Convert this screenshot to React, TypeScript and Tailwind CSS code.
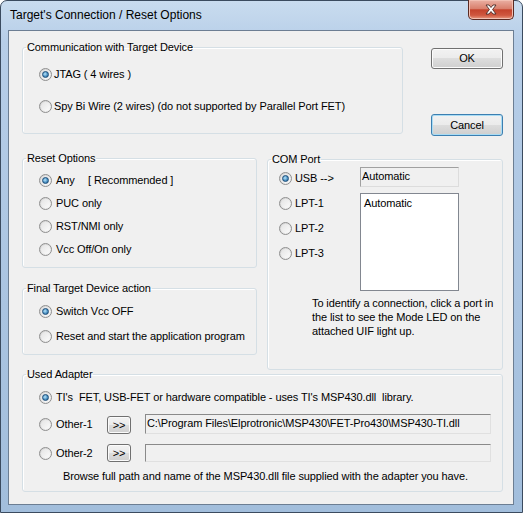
import React from "react";

const font = "font-['Liberation_Sans',Arial,sans-serif]";

function Radio({ checked }: { checked?: boolean }) {
  return (
    <span className="relative flex h-[13px] w-[13px] shrink-0 items-center justify-center rounded-full border border-[#8f8f8f] bg-[linear-gradient(135deg,#cfcfcf,#f7f7f7)]">
      <span className="h-[9px] w-[9px] rounded-full bg-[linear-gradient(135deg,#e4e4e4,#fbfbfb)]" />
      {checked && (
        <span className="absolute h-[7px] w-[7px] rounded-full border border-[#1d4e79] bg-[radial-gradient(circle_at_40%_40%,#b9e6fb,#4d92c4_55%,#1f5c8c)]" />
      )}
    </span>
  );
}

function Option({
  checked,
  children,
  gap = "gap-[4px]",
}: {
  checked?: boolean;
  children: React.ReactNode;
  gap?: string;
}) {
  return (
    <div className={`flex h-[16px] items-center ${gap}`}>
      <Radio checked={checked} />
      <span className="whitespace-pre leading-[16px]">{children}</span>
    </div>
  );
}

function Group({
  title,
  className,
  children,
}: {
  title: string;
  className: string;
  children: React.ReactNode;
}) {
  return (
    <fieldset
      className={`min-w-0 rounded-[3px] border border-[#d5dfe5] shadow-[inset_1px_1px_0_#ffffff] ${className}`}
    >
      <legend className="ml-[3px] px-[1px] leading-[12px]">{title}</legend>
      {children}
    </fieldset>
  );
}

function Button({
  children,
  focused,
  className,
}: {
  children: React.ReactNode;
  focused?: boolean;
  className: string;
}) {
  return (
    <div
      className={`flex items-center justify-center rounded-[3px] border bg-[linear-gradient(#f2f2f2_0%,#ebebeb_50%,#dddddd_50%,#cfcfcf_100%)] ${
        focused
          ? "border-[#3c7fb1] shadow-[inset_0_0_0_1px_#a9dcf4]"
          : "border-[#707070] shadow-[inset_0_0_0_1px_#fbfbfb]"
      } ${className}`}
    >
      {children}
    </div>
  );
}

function CloseGlyph() {
  return (
    <svg width="12" height="11" viewBox="0 0 12 11">
      <path
        d="M1 1h3l2 2.5L8 1h3L7.6 5.5 11 10H8L6 7.5 4 10H1l3.4-4.5z"
        fill="#ffffff"
        stroke="#4b2a26"
        strokeWidth="0.9"
        strokeLinejoin="round"
      />
    </svg>
  );
}

export default function App() {
  return (
    <div
      className={`flex h-[513px] w-[523px] flex-col rounded-t-[7px] border border-[#3b4b5f] bg-[linear-gradient(180deg,#c9dcef_0%,#b7cee8_8%,#aac4e1_60%,#a2bedc_100%)] text-[11px] tracking-[-0.1px] text-black ${font}`}
    >
      {/* TITLE BAR */}
      <div className="flex h-[29px] shrink-0 items-start justify-between">
        <div className="pl-[9px] pt-[7px] text-[12px] leading-[15px] tracking-normal text-black">
          Target's Connection / Reset Options
        </div>
        <div className="-mt-px mr-[8px] flex h-[20px] w-[46px] items-center justify-center rounded-b-[5px] border border-t-0 border-[#5a2a22] bg-[linear-gradient(#eab0a3_0%,#d9806d_45%,#c4432c_52%,#cf573f_80%,#e89a80_100%)] shadow-[inset_0_0_0_1px_#f2c0b3]">
          <CloseGlyph />
        </div>
      </div>

      {/* CLIENT */}
      <div className="ml-[7px] mr-[8px] h-[475px] shrink-0 border border-[#6c7e93] bg-[#f0f0f0] pl-[13px] pt-[10px]">
        {/* ROW 1 */}
        <div className="flex">
          <Group title="Communication with Target Device" className="h-[93px] w-[381px]">
            <div className="pl-[16px] pt-[13px]">
              <Option checked gap="gap-[2px]">JTAG ( 4 wires )</Option>
              <div className="mt-[16px]">
                <Option gap="gap-[2px]">Spy Bi Wire (2 wires) (do not supported by Parallel Port FET)</Option>
              </div>
            </div>
          </Group>
          <div className="ml-[28px] mt-[7px] flex flex-col">
            <Button className="h-[21px] w-[72px]">OK</Button>
            <Button focused className="mt-[45px] h-[22px] w-[72px]">
              Cancel
            </Button>
          </div>
        </div>

        {/* ROW 2 */}
        <div className="mt-[16px] flex gap-[10px]">
          <div className="flex w-[235px] flex-col">
            <Group title="Reset Options" className="h-[116px] w-[235px]">
              <div className="flex flex-col gap-[7px] pl-[16px] pt-[8px]">
                <Option checked>
                  <span className="inline-block w-[32px]">Any</span>[ Recommended ]
                </Option>
                <Option>PUC only</Option>
                <Option>RST/NMI only</Option>
                <Option>Vcc Off/On only</Option>
              </div>
            </Group>
            <Group title="Final Target Device action" className="mt-[14px] h-[73px] w-[235px]">
              <div className="flex flex-col gap-[9px] pl-[16px] pt-[9px]">
                <Option checked>Switch Vcc OFF</Option>
                <Option>Reset and start the application program</Option>
              </div>
            </Group>
          </div>

          <Group title="COM Port" className="mt-px h-[217px] w-[236px]">
            <div className="flex">
              <div className="flex w-[92px] flex-col gap-[9px] pl-[11px] pt-[5px]">
                <Option checked gap="gap-[3px]">USB --&gt;</Option>
                <Option gap="gap-[3px]">LPT-1</Option>
                <Option gap="gap-[3px]">LPT-2</Option>
                <Option gap="gap-[3px]">LPT-3</Option>
              </div>
              <div className="flex flex-col pt-[2px]">
                <div className="h-[20px] w-[99px] border border-[#a0a0a0] border-b-[#dcdcdc] border-r-[#dcdcdc] bg-[#f0f0f0] pl-[1px] leading-[16px]">
                  Automatic
                </div>
                <div className="mt-[6px] h-[98px] w-[99px] border border-[#828790] bg-white pl-[3px] pt-[2px] leading-[14px]">
                  Automatic
                </div>
              </div>
            </div>
            <p className="pl-[44px] pt-[5px] leading-[14px]">
              To identify a connection, click a port in
              <br />
              the list to see the Mode LED on the
              <br />
              attached UIF light up.
            </p>
          </Group>
        </div>

        {/* ROW 3 */}
        <Group title="Used Adapter" className="-mt-[2px] h-[124px] w-[481px]">
          <div className="flex flex-col pl-[16px] pt-[9px]">
            <Option checked>TI's  FET, USB-FET or hardware compatible - uses TI's MSP430.dll  library.</Option>

            <div className="mt-[9px] flex h-[20px] items-center">
              <div className="w-[68px]">
                <Option>Other-1</Option>
              </div>
              <Button className="mt-px h-[18px] w-[24px] leading-[14px]">&gt;&gt;</Button>
              <div className="ml-[14px] h-[20px] w-[346px] border border-[#8a8a8a] border-b-[#e0e0e0] border-r-[#e0e0e0] bg-[#f0f0f0] pl-[1px] leading-[16px]">
                {"C:\\Program Files\\Elprotronic\\MSP430\\FET-Pro430\\MSP430-TI.dll"}
              </div>
            </div>

            <div className="mt-[10px] flex h-[18px] items-center">
              <div className="w-[68px]">
                <Option>Other-2</Option>
              </div>
              <Button className="h-[18px] w-[24px] leading-[14px]">&gt;&gt;</Button>
              <div className="ml-[14px] h-[18px] w-[346px] border border-[#8a8a8a] border-b-[#e0e0e0] border-r-[#e0e0e0] bg-[#f0f0f0]" />
            </div>

            <p className="mt-[7px] pl-[24px] leading-[14px]">
              Browse full path and name of the MSP430.dll file supplied with the adapter you have.
            </p>
          </div>
        </Group>
      </div>
    </div>
  );
}
